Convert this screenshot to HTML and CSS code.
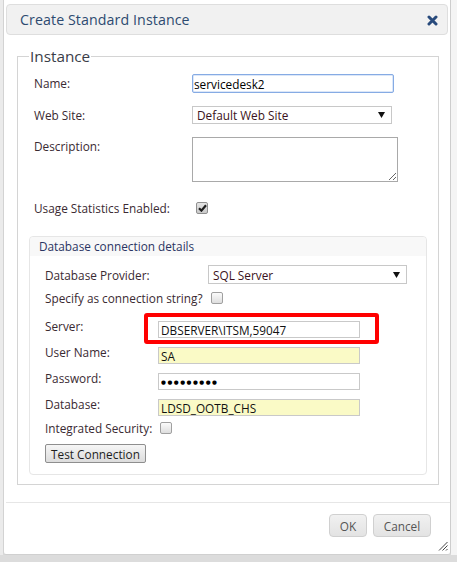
FILE: index.html
```html
<!DOCTYPE html>
<html>
<head>
<meta charset="utf-8">
<title>Create Standard Instance</title>
<link rel="stylesheet" href="styles.css">
</head>
<body>
<div class="page">
  <div class="strip-left"></div>
  <div class="dialog">
    <div class="titlebar">
      <span class="title">Create Standard Instance</span>
      <span class="close" aria-label="Close">
        <svg width="11" height="11" viewBox="0 0 11 11"><path d="M2 2 L9 9 M9 2 L2 9" stroke="#284a7c" stroke-width="3" stroke-linecap="round" fill="none"/></svg>
      </span>
    </div>
    <div class="content">
      <fieldset class="instance">
        <legend>Instance</legend>
        <div class="row row-name">
          <span class="label">Name:</span>
          <input class="field field-focus" type="text" value="servicedesk2">
        </div>
        <div class="row row-site">
          <span class="label">Web Site:</span>
          <span class="select select-site">Default Web Site<svg class="arrow" width="7" height="6" viewBox="0 0 7 6"><path d="M0 0 H7 L3.5 6 Z" fill="#111"/></svg></span>
        </div>
        <div class="row row-desc">
          <span class="label">Description:</span>
          <textarea class="desc"></textarea>
        </div>
        <div class="row row-usage">
          <span class="label">Usage Statistics Enabled:</span>
          <span class="check check-on"><svg width="9" height="8" viewBox="0 0 9 8"><path d="M1 4.2 L3.4 6.6 L8 1.2" stroke="#1d1d1d" stroke-width="2.2" fill="none"/></svg></span>
        </div>
        <div class="dbbox">
          <div class="dbhead">Database connection details</div>
          <div class="dbbody">
            <div class="dbrow dbrow-provider">
              <span class="dblabel-wide">Database Provider:</span>
              <span class="select select-provider">SQL Server<svg class="arrow" width="7" height="6" viewBox="0 0 7 6"><path d="M0 0 H7 L3.5 6 Z" fill="#111"/></svg></span>
            </div>
            <div class="dbrow dbrow-inline">
              <span class="dblabel-inline">Specify as connection string?</span>
              <span class="check check-off"></span>
            </div>
            <div class="dbrow dbrow-field">
              <span class="dblabel">Server:</span>
              <span class="anchor">
                <input class="field field-db" type="text" value="DBSERVER\ITSM,59047">
                <span class="highlight"></span>
              </span>
            </div>
            <div class="dbrow dbrow-field">
              <span class="dblabel">User Name:</span>
              <input class="field field-db field-auto" type="text" value="SA">
            </div>
            <div class="dbrow dbrow-field">
              <span class="dblabel">Password:</span>
              <input class="field field-db field-pass" type="text" value="●●●●●●●●●">
            </div>
            <div class="dbrow dbrow-field dbrow-last">
              <span class="dblabel">Database:</span>
              <input class="field field-db field-auto" type="text" value="LDSD_OOTB_CHS">
            </div>
            <div class="dbrow dbrow-inline dbrow-integrated">
              <span class="dblabel-inline">Integrated Security:</span>
              <span class="check check-off"></span>
            </div>
            <button class="btn-test" type="button">Test Connection</button>
          </div>
        </div>
      </fieldset>
    </div>
    <div class="footer">
      <button class="btn" type="button">OK</button>
      <button class="btn" type="button">Cancel</button>
    </div>
    <svg class="grip" width="10" height="10" viewBox="0 0 10 10"><path d="M9.5 1 L1 9.5 M9.5 4.5 L4.5 9.5 M9.5 8 L8 9.5" stroke="#444" stroke-width="1" fill="none"/></svg>
  </div>
  <div class="strip-right"></div>
</div>
</body>
</html>
```
FILE: styles.css
```css
* { box-sizing: border-box; }
html, body { margin: 0; padding: 0; }
body {
  background: #dcdcdc;
  font-family: "Open Sans", "DejaVu Sans", sans-serif;
  font-size: 11.8px;
  color: #3a2a32;
}
.page {
  display: flex;
  width: 457px;
  height: 562px;
  align-items: flex-start;
}
.strip-left {
  width: 3px;
  height: 555px;
  background: #ebebeb;
}
.strip-right {
  flex: 1;
  height: 555px;
  background: #f4f4f4;
}
.dialog {
  position: relative;
  width: 448px;
  height: 555px;
  background: #fff;
  border-left: 1px solid #d3d3d3;
  border-right: 1px solid #cdcdcd;
  border-bottom: 1px solid #d0d0d0;
  border-bottom-left-radius: 3px;
  border-bottom-right-radius: 3px;
  display: flex;
  flex-direction: column;
}
.titlebar {
  margin: 4px 2px 0 2px;
  height: 31px;
  border: 1px solid #dedede;
  border-radius: 4px;
  background: #f1f1f1;
  display: flex;
  align-items: center;
  justify-content: space-between;
  padding: 0 9px 0 13px;
}
.title {
  font-size: 14.2px;
  color: #2d4a70;
  letter-spacing: 0.1px;
  padding-bottom: 1px;
}
.close { display: flex; margin-top: 1px; }
.content {
  padding: 12px 11px 0 13px;
}
.instance {
  margin: 0;
  border: 1px solid #d4d4d4;
  padding: 9px 11px 9px 11px;
  min-width: 0;
}
.instance legend {
  padding: 0 1px;
  font-size: 15.3px;
  line-height: 18px;
  color: #3a3d47;
}
.row {
  display: flex;
  align-items: flex-start;
  padding-left: 5px;
}
.label {
  width: 158px;
  line-height: 18px;
  flex: none;
}
.row-name { height: 19px; margin-bottom: 13px; }
.row-site { height: 18px; margin-bottom: 13px; }
.row-desc { height: 45px; margin-bottom: 17px; }
.row-usage { height: 18px; margin-bottom: 19px; align-items: center; }
.field {
  font-family: "Open Sans", "DejaVu Sans", sans-serif;
  font-size: 11.8px;
  color: #111;
  border: 1px solid #c9c9c9;
  background: #fff;
  padding: 0 1px;
  margin: 0;
  outline: none;
  border-radius: 0;
}
.field-focus {
  width: 202px;
  height: 19px;
  border: 1px solid #86abe4;
  border-radius: 2px;
  box-shadow: inset 0 0 0 0.5px #b9d0f2;
  color: #000;
}
.select {
  display: flex;
  align-items: center;
  justify-content: space-between;
  border: 1px solid #c8c8c8;
  background: #fff;
  color: #3b1220;
  font-size: 11.8px;
  padding: 0 6px 0 4px;
}
.select-site { width: 200px; height: 18px; }
.select-provider { width: 199px; height: 19px; }
.arrow { flex: none; }
.desc {
  width: 206px;
  height: 45px;
  margin: 0;
  border: 1px solid #a9a9a9;
  border-radius: 0;
  padding: 2px;
  font-family: "Open Sans", sans-serif;
  font-size: 11.8px;
  resize: both;
  background: #fff;
}
.check {
  flex: none;
  display: inline-flex;
  align-items: center;
  justify-content: center;
  width: 12px;
  height: 12px;
  border: 1px solid #a0a0a0;
  border-radius: 2px;
  background: linear-gradient(#fbfbfb, #dedede);
}
.check-on {
  margin-left: 4px;
  border-color: #8f8f8f;
  background: linear-gradient(#e4e4e4, #c9c9c9);
}
.dbbox {
  border: 1px solid #e6e6e6;
  border-radius: 4px;
}
.dbhead {
  height: 19px;
  line-height: 19px;
  background: #f8f8f8;
  color: #2b3563;
  padding-left: 9px;
  border-radius: 4px 4px 0 0;
}
.dbbody {
  padding: 9px 15px 11px 15px;
}
.dbrow {
  display: flex;
  align-items: flex-start;
}
.dbrow-provider {
  height: 19px;
  margin-bottom: 7px;
  align-items: center;
}
.dblabel-wide {
  width: 163px;
  flex: none;
  line-height: 19px;
  padding-top: 2px;
}
.dbrow-inline {
  align-items: center;
  height: 14px;
  margin-bottom: 14px;
}
.dblabel-inline {
  line-height: 14px;
  margin-right: 8px;
}
.dbrow-field {
  height: 19px;
  margin-bottom: 7px;
}
.dbrow-last { margin-bottom: 5px; }
.dbrow-integrated { margin-bottom: 9px; }
.dblabel {
  width: 113px;
  flex: none;
  line-height: 14px;
}
.field-db {
  width: 202px;
  height: 17px;
  margin-top: 2px;
  padding: 0 2px;
  display: block;
}
.field-auto { background: #fafac6; }
.field-pass {
  font-family: "DejaVu Sans", sans-serif;
  font-size: 5.6px;
  letter-spacing: 1.5px;
  color: #000;
}
.anchor {
  position: relative;
  display: block;
}
.highlight {
  position: absolute;
  left: -14px;
  top: -6px;
  width: 235px;
  height: 31px;
  border: 4px solid #ff0000;
  border-radius: 3px;
  pointer-events: none;
}
.btn-test {
  display: block;
  width: 101px;
  height: 19px;
  padding: 0;
  margin: 0;
  font-family: "Open Sans", sans-serif;
  font-size: 11.8px;
  color: #1e1e1e;
  border: 1px solid #8e8e8e;
  border-radius: 2px;
  background: linear-gradient(#f6f6f6, #dcdcdc);
}
.footer {
  margin-top: 17px;
  border-top: 1px solid #e6e6e6;
  margin-left: 2px;
  padding: 11px 19px 0 0;
  display: flex;
  justify-content: flex-end;
  gap: 6px;
}
.btn {
  height: 23px;
  padding: 0;
  font-family: "Open Sans", sans-serif;
  font-size: 11.8px;
  color: #555;
  border: 1px solid #d0d0d0;
  border-radius: 4px;
  background: linear-gradient(#f1f1f1, #e3e3e3);
}
.btn:first-child { width: 38px; }
.btn:last-child { width: 58px; }
.grip {
  position: absolute;
  right: 2px;
  bottom: 3px;
}
```
